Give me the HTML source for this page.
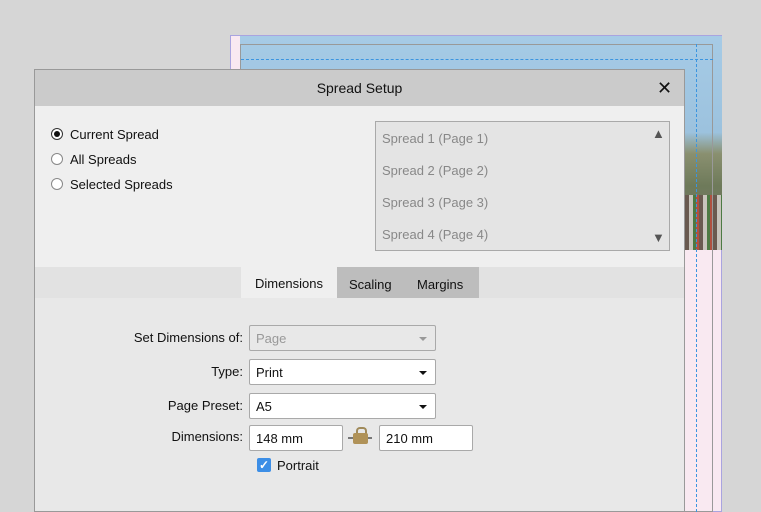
<!DOCTYPE html>
<html><head><style>
body{margin:0;width:761px;height:512px;background:#d6d6d6;position:relative;overflow:hidden;font-family:"Segoe UI","Liberation Sans",sans-serif;font-size:13px;color:#111}
.a{position:absolute}
.inp{position:absolute;background:#fff;border:1px solid #a9a9a9;border-radius:2px;box-sizing:border-box;height:26px;line-height:26px;padding-left:6px;font-size:13px}
.arr{position:absolute;right:8px;top:11px;width:0;height:0;border-left:4px solid transparent;border-right:4px solid transparent;border-top:4px solid #111}
.rad{position:absolute;width:12px;height:12px;border:1px solid #888;border-radius:50%;background:#fff;box-sizing:border-box}
.lbl{position:absolute;text-align:right;width:200px}
</style></head><body>
<div class="a" style="left:230px;top:35px;width:492px;height:477px;background:#f9e9f1;border:1px solid #a9a4e0;box-sizing:border-box"></div>
<div class="a" style="left:240px;top:36px;width:482px;height:214px;background:linear-gradient(180deg,#a6cbe6 0%,#9cc2de 45%,#8a9070 55%,#6e7a5a 70%,#7a7470 100%)"></div>
<div class="a" style="left:685px;top:195px;width:37px;height:55px;background:repeating-linear-gradient(90deg,#6a5a50 0 4px,#c8c4bc 4px 8px,#4d7a43 8px 11px,#b05040 11px 14px)"></div>
<div class="a" style="left:240px;top:44px;width:473px;height:468px;border:1px solid #999;box-sizing:border-box"></div>
<div class="a" style="left:241px;top:59px;width:472px;border-top:1px dashed #3b95e0"></div>
<div class="a" style="left:696px;top:44px;height:468px;border-left:1px dashed #3b95e0"></div>
<div class="a" style="left:34px;top:69px;width:651px;height:443px;background:#e8e8e8;border:1px solid #999;box-sizing:border-box"></div>
<div class="a" style="left:35px;top:70px;width:649px;height:36px;background:#cbcbcb"></div>
<div class="a" style="left:35px;top:80px;width:649px;text-align:center;font-size:14px">Spread Setup</div>
<div class="a" style="left:657px;top:78px;font-size:18px">✕</div>
<div class="a" style="left:35px;top:106px;width:649px;height:161px;background:#efefef"></div>
<div class="rad" style="left:51px;top:128px;border-color:#333"><div class="a" style="left:2px;top:2px;width:6px;height:6px;border-radius:50%;background:#111"></div></div>
<div class="a" style="left:70px;top:127px">Current Spread</div>
<div class="rad" style="left:51px;top:153px"></div><div class="a" style="left:70px;top:152px">All Spreads</div>
<div class="rad" style="left:51px;top:178px"></div><div class="a" style="left:70px;top:177px">Selected Spreads</div>
<div class="a" style="left:375px;top:121px;width:295px;height:130px;background:#e4e4e4;border:1px solid #a9a9a9;box-sizing:border-box;color:#888">
<div class="a" style="left:6px;top:9px">Spread 1 (Page 1)</div>
<div class="a" style="left:6px;top:41px">Spread 2 (Page 2)</div>
<div class="a" style="left:6px;top:73px">Spread 3 (Page 3)</div>
<div class="a" style="left:6px;top:105px">Spread 4 (Page 4)</div>
<div class="a" style="left:276px;top:4px;font-size:13px;color:#555">▲</div>
<div class="a" style="left:276px;top:108px;font-size:13px;color:#555">▼</div></div>
<div class="a" style="left:35px;top:267px;width:649px;height:31px;background:#e2e2e2"></div>
<div class="a" style="left:241px;top:267px;width:96px;height:31px;background:#efefef;text-align:center;line-height:34px">Dimensions</div>
<div class="a" style="left:337px;top:267px;width:142px;height:31px;background:#bdbdbd"></div>
<div class="a" style="left:349px;top:277px">Scaling</div><div class="a" style="left:417px;top:277px">Margins</div>
<div class="lbl" style="left:43px;top:330px">Set Dimensions of:</div>
<div class="inp" style="left:249px;top:325px;width:187px;background:#e8e8e8;color:#999">Page<div class="arr" style="border-top-color:#999"></div></div>
<div class="lbl" style="left:43px;top:364px">Type:</div>
<div class="inp" style="left:249px;top:359px;width:187px">Print<div class="arr"></div></div>
<div class="lbl" style="left:43px;top:398px">Page Preset:</div>
<div class="inp" style="left:249px;top:393px;width:187px">A5<div class="arr"></div></div>
<div class="lbl" style="left:43px;top:429px">Dimensions:</div>
<div class="inp" style="left:249px;top:425px;width:94px">148 mm</div>
<div class="a" style="left:348px;top:437px;width:24px;height:2px;background:#777"></div>
<div class="a" style="left:356px;top:427px;width:7px;height:8px;border:2px solid #a08a5a;border-bottom:none;border-radius:4px 4px 0 0"></div>
<div class="a" style="left:353px;top:433px;width:15px;height:11px;background:#b09258;border-radius:2px"></div>
<div class="inp" style="left:379px;top:425px;width:94px">210 mm</div>
<div class="a" style="left:257px;top:458px;width:14px;height:14px;background:#3c8ee6;border-radius:2px;color:#fff;font-size:12px;line-height:14px;text-align:center;font-weight:bold">✓</div>
<div class="a" style="left:277px;top:458px">Portrait</div>
</body></html>
